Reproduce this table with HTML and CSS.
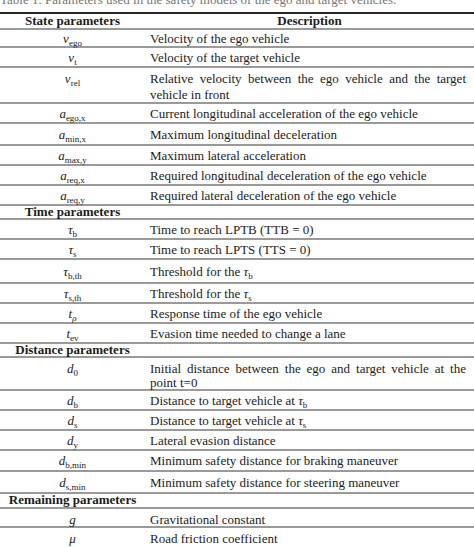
FILE: index.html
```html
<!DOCTYPE html>
<html>
<head>
<meta charset="utf-8">
<link rel="stylesheet" href="styles.css">
</head>
<body>
<div class="caption">Table 1. Parameters used in the safety models of the ego and target vehicles.</div>
<div class="table">
  <div class="row head"><div class="c1 b">State parameters</div><div class="c2 b center">Description</div></div>
  <div class="row short"><div class="c1"><i>v</i><sub>ego</sub></div><div class="c2">Velocity of the ego vehicle</div></div>
  <div class="row"><div class="c1"><i>v</i><sub>t</sub></div><div class="c2">Velocity of the target vehicle</div></div>
  <div class="row two"><div class="c1"><i>v</i><sub>rel</sub></div><div class="c2 just">Relative velocity between the ego vehicle and the target vehicle in front</div></div>
  <div class="row"><div class="c1"><i>a</i><sub>ego,x</sub></div><div class="c2">Current longitudinal acceleration of the ego vehicle</div></div>
  <div class="row tall"><div class="c1"><i>a</i><sub>min,x</sub></div><div class="c2">Maximum longitudinal deceleration</div></div>
  <div class="row"><div class="c1"><i>a</i><sub>max,y</sub></div><div class="c2">Maximum lateral acceleration</div></div>
  <div class="row"><div class="c1"><i>a</i><sub>req,x</sub></div><div class="c2">Required longitudinal deceleration of the ego vehicle</div></div>
  <div class="row"><div class="c1"><i>a</i><sub>req,y</sub></div><div class="c2">Required lateral deceleration of the ego vehicle</div></div>
  <div class="row sec"><div class="c1 b">Time parameters</div><div class="c2"></div></div>
  <div class="row"><div class="c1"><i>τ</i><sub>b</sub></div><div class="c2">Time to reach LPTB (TTB = 0)</div></div>
  <div class="row"><div class="c1"><i>τ</i><sub>s</sub></div><div class="c2">Time to reach LPTS (TTS = 0)</div></div>
  <div class="row taller"><div class="c1"><i>τ</i><sub>b,th</sub></div><div class="c2">Threshold for the <i>τ</i><sub>b</sub></div></div>
  <div class="row"><div class="c1"><i>τ</i><sub>s,th</sub></div><div class="c2">Threshold for the <i>τ</i><sub>s</sub></div></div>
  <div class="row"><div class="c1"><i>t</i><sub><i>ρ</i></sub></div><div class="c2">Response time of the ego vehicle</div></div>
  <div class="row"><div class="c1"><i>t</i><sub>ev</sub></div><div class="c2">Evasion time needed to change a lane</div></div>
  <div class="row sec"><div class="c1 b">Distance parameters</div><div class="c2"></div></div>
  <div class="row two2"><div class="c1"><i>d</i><sub>0</sub></div><div class="c2 just">Initial distance between the ego and target vehicle at the point t=0</div></div>
  <div class="row"><div class="c1"><i>d</i><sub>b</sub></div><div class="c2">Distance to target vehicle at <i>τ</i><sub>b</sub></div></div>
  <div class="row"><div class="c1"><i>d</i><sub>s</sub></div><div class="c2">Distance to target vehicle at <i>τ</i><sub>s</sub></div></div>
  <div class="row"><div class="c1"><i>d</i><sub>y</sub></div><div class="c2">Lateral evasion distance</div></div>
  <div class="row mid"><div class="c1"><i>d</i><sub>b,min</sub></div><div class="c2">Minimum safety distance for braking maneuver</div></div>
  <div class="row tall"><div class="c1"><i>d</i><sub>s,min</sub></div><div class="c2">Minimum safety distance for steering maneuver</div></div>
  <div class="row sec wide"><div class="c1 b">Remaining parameters</div><div class="c2"></div></div>
  <div class="row grav"><div class="c1"><i>g</i></div><div class="c2">Gravitational constant</div></div>
  <div class="row last"><div class="c1"><i>μ</i></div><div class="c2">Road friction coefficient</div></div>
</div>
</body>
</html>
```

FILE: styles.css
```css
html, body {
  margin: 0;
  padding: 0;
  background: #ffffff;
}
body {
  width: 474px;
  height: 547px;
  overflow: hidden;
  font-family: "Liberation Serif", "Times New Roman", serif;
  font-size: 13px;
  color: #1c1c1c;
}
.caption {
  margin-top: -8px;
  margin-bottom: 5px;
  line-height: 15px;
  height: 15px;
  color: #777;
  white-space: nowrap;
  overflow: hidden;
}
.table {
  border-top: 2px solid #262626;
}
.row {
  display: grid;
  grid-template-columns: 145px 1fr;
  box-sizing: border-box;
  height: 20px;
  border-bottom: 2px solid #9a9a9a;
  line-height: 15px;
}
.row.head { height: 16px; line-height: 14px; }
.row.short { height: 18px; }
.row.grav { height: 19px; }
.row.mid { height: 21px; }
.row.tall { height: 22px; }
.row.taller { height: 24px; }
.row.two { height: 36px; }
.row.two2 { height: 33px; }
.row.sec { height: 14px; line-height: 12px; }
.row.wide { height: 15px; }
.row.last { height: 24px; border-bottom: none; }
.c1 {
  text-align: center;
  padding-top: 2px;
  white-space: nowrap;
}
.c2 {
  padding: 2px 8px 0 5px;
}
.row.head .c1, .row.head .c2, .row.sec .c1 { padding-top: 0; }
.row.short .c1, .row.short .c2 { padding-top: 1px; }
.row.taller .c1, .row.taller .c2 { padding-top: 4px; }
.row.tall .c1, .row.tall .c2 { padding-top: 3px; }
.row.grav .c1, .row.grav .c2 { padding-top: 3px; }
.row.last .c1, .row.last .c2 { padding-top: 3px; }
.row.two .c1, .row.two .c2 { padding-top: 3px; line-height: 16px; }
.row.two2 .c1, .row.two2 .c2 { padding-top: 4px; line-height: 14px; }
.b { font-weight: bold; }
.center { text-align: center; padding-left: 0; padding-right: 0; }
.just { text-align: justify; }
i { font-style: italic; }
sub {
  font-size: 9px;
  font-style: normal;
  vertical-align: -3px;
  line-height: 0;
}
sub i { font-style: italic; }
```
